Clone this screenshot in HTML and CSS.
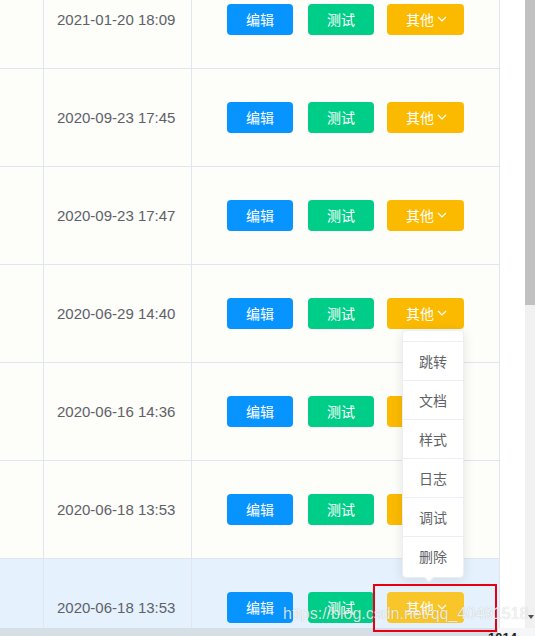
FILE: index.html
```html
<!DOCTYPE html>
<html lang="zh">
<head>
<meta charset="utf-8">
<title>表格</title>
<link rel="stylesheet" href="styles.css">
</head>
<body>
<div class="screen">
  <div class="viewport">
    <div class="table-area">
      <div class="table">
        <div class="row"><div class="cell c1"></div><div class="cell c2">2021-01-20 18:09</div><div class="cell c3"><span class="btn edit">编辑</span><span class="btn test">测试</span><span class="btn more">其他<svg class="chev" viewBox="0 0 10 6"><polyline points="1,1 5,5 9,1"/></svg></span></div></div>
        <div class="row"><div class="cell c1"></div><div class="cell c2">2020-09-23 17:45</div><div class="cell c3"><span class="btn edit">编辑</span><span class="btn test">测试</span><span class="btn more">其他<svg class="chev" viewBox="0 0 10 6"><polyline points="1,1 5,5 9,1"/></svg></span></div></div>
        <div class="row"><div class="cell c1"></div><div class="cell c2">2020-09-23 17:47</div><div class="cell c3"><span class="btn edit">编辑</span><span class="btn test">测试</span><span class="btn more">其他<svg class="chev" viewBox="0 0 10 6"><polyline points="1,1 5,5 9,1"/></svg></span></div></div>
        <div class="row"><div class="cell c1"></div><div class="cell c2">2020-06-29 14:40</div><div class="cell c3"><span class="btn edit">编辑</span><span class="btn test">测试</span><span class="btn more">其他<svg class="chev" viewBox="0 0 10 6"><polyline points="1,1 5,5 9,1"/></svg></span></div></div>
        <div class="row"><div class="cell c1"></div><div class="cell c2">2020-06-16 14:36</div><div class="cell c3"><span class="btn edit">编辑</span><span class="btn test">测试</span><span class="btn more">其他<svg class="chev" viewBox="0 0 10 6"><polyline points="1,1 5,5 9,1"/></svg></span></div></div>
        <div class="row"><div class="cell c1"></div><div class="cell c2">2020-06-18 13:53</div><div class="cell c3"><span class="btn edit">编辑</span><span class="btn test">测试</span><span class="btn more">其他<svg class="chev" viewBox="0 0 10 6"><polyline points="1,1 5,5 9,1"/></svg></span></div></div>
        <div class="row hover"><div class="cell c1"></div><div class="cell c2">2020-06-18 13:53</div><div class="cell c3"><span class="btn edit">编辑</span><span class="btn test">测试</span><span class="btn more active">其他<svg class="chev" viewBox="0 0 10 6"><polyline points="1,1 5,5 9,1"/></svg></span></div></div>
      </div>
    </div>
    <div class="vscroll">
      <div class="thumb"></div>
      <div class="track"></div>
      <div class="arrow-down"></div>
    </div>
  </div>
  <div class="hbar"><div class="hbar-gray"></div><div class="hbar-end"></div></div>

  <div class="dropdown">
    <div class="item">跳转</div>
    <div class="item">文档</div>
    <div class="item">样式</div>
    <div class="item">日志</div>
    <div class="item">调试</div>
    <div class="item">删除</div>
    <div class="pop-arrow"></div>
  </div>
  <div class="highlight"></div>
  <div class="watermark">https://blog.csdn.net/qq_40491518</div>
  <div class="page-num">1014</div>
</div>
</body>
</html>
```

FILE: styles.css
```css
* { box-sizing: border-box; }
html, body { margin: 0; padding: 0; }
body {
  width: 535px;
  height: 636px;
  overflow: hidden;
  font-family: "Liberation Sans", "Noto Sans CJK SC", Arial, sans-serif;
  background: #ffffff;
}
.screen {
  position: relative;
  width: 535px;
  height: 636px;
  overflow: hidden;
}
.viewport {
  display: flex;
  height: 628px;
  overflow: hidden;
}
.table-area {
  width: 525px;
  background: #ffffff;
  overflow: hidden;
}
.table {
  width: 500px;
  margin-top: -29px;
}
.row {
  display: flex;
  height: 98px;
  border-bottom: 1px solid #dfe6ef;
  background: #fdfdfa;
}
.row.hover { background: #e5f2fd; }
.cell {
  display: flex;
  align-items: center;
  border-right: 1px solid #dfe6ef;
}
.c1 { width: 44px; }
.c2 {
  width: 148px;
  padding-left: 13px;
  font-size: 15px;
  color: #5e6168;
}
.c3 {
  width: 308px;
  padding-left: 35px;
  padding-bottom: 1px;
}
.btn {
  display: inline-flex;
  align-items: center;
  justify-content: center;
  height: 31px;
  border-radius: 4px;
  color: #ffffff;
  font-family: "Noto Sans CJK SC", "Liberation Sans", sans-serif;
  font-size: 14px;
}
.edit { width: 66px; background: #0894ff; margin-right: 15px; }
.test { width: 66px; background: #00ce88; margin-right: 13px; }
.more { width: 77px; background: #fbba00; padding-left: 2px; }
.more.active { background: #f9c629; }
.chev {
  width: 10px;
  height: 6px;
  margin-left: 3px;
  fill: none;
  stroke: #ffffff;
  stroke-width: 1.2;
}
.vscroll {
  width: 10px;
  display: flex;
  flex-direction: column;
  background: #f1f1f1;
}
.thumb { height: 305px; background: #c1c1c1; }
.track { flex: 1; }
.arrow-down {
  height: 16px;
  display: flex;
  align-items: center;
  justify-content: center;
}
.arrow-down::before {
  content: "";
  border-left: 3.5px solid transparent;
  border-right: 3.5px solid transparent;
  border-top: 4px solid #505050;
  margin-left: 2px;
  margin-bottom: 6px;
}
.hbar {
  display: flex;
  height: 8px;
}
.hbar-gray { width: 498px; background: #d5dfe5; }
.hbar-end { flex: 1; background: #f4f6f7; }

.dropdown {
  position: absolute;
  left: 402px;
  top: 330px;
  width: 62px;
  padding: 10px 0 2px;
  background: #ffffff;
  border: 1px solid #ebeef5;
  border-radius: 4px;
  box-shadow: 0 2px 12px rgba(0, 0, 0, 0.1);
}
.item {
  height: 39px;
  border-top: 1px solid #ebeef5;
  display: flex;
  align-items: center;
  justify-content: center;
  font-family: "Noto Sans CJK SC", "Liberation Sans", sans-serif;
  font-size: 14px;
  color: #606266;
}
.pop-arrow {
  position: absolute;
  left: 20px;
  bottom: -6px;
  width: 0;
  height: 0;
  border-left: 6px solid transparent;
  border-right: 6px solid transparent;
  border-top: 6px solid #ebeef5;
}
.pop-arrow::after {
  content: "";
  position: absolute;
  left: -5px;
  top: -7px;
  border-left: 5px solid transparent;
  border-right: 5px solid transparent;
  border-top: 5px solid #ffffff;
}
.highlight {
  position: absolute;
  left: 373px;
  top: 584px;
  width: 124px;
  height: 48px;
  border: 2px solid #e60012;
}
.watermark {
  position: absolute;
  left: 283px;
  top: 604px;
  font-family: "Liberation Sans", Arial, sans-serif;
  font-size: 16px;
  line-height: 20px;
  color: rgba(255, 255, 255, 0.82);
  text-shadow: 0 0 1px rgba(0, 0, 0, 0.25);
  white-space: nowrap;
}
.page-num {
  position: absolute;
  left: 488px;
  top: 631px;
  font-size: 13px;
  font-weight: bold;
  line-height: 14px;
  color: #222222;
}
```
